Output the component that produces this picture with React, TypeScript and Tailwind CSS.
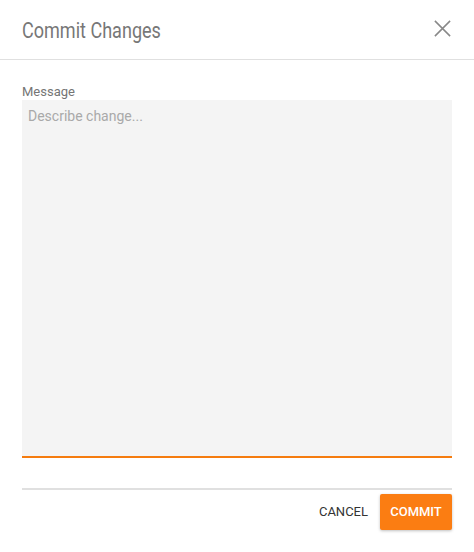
export default function App() {
  return (
    <div className="w-[474px] h-[552px] bg-white font-['Roboto',sans-serif]">
      <div className="flex items-center justify-between h-[60px] pl-[22px] pr-[22px] border-b border-[#e0e0e0]">
        <h2 className="text-[22px] leading-[26px] mt-[2px] text-[#777] font-normal origin-left scale-x-[0.82]">
          Commit Changes
        </h2>
        <button className="text-[#888] mt-[-2px]">
          <svg width="19" height="19" viewBox="0 0 20 20" fill="none" stroke="currentColor" strokeWidth="1.6">
            <path d="M2 2 L18 18 M18 2 L2 18" />
          </svg>
        </button>
      </div>
      <div className="px-[22px] pt-[24px]">
        <label className="block text-[13px] leading-[16px] text-[#757575]">Message</label>
        <textarea
          placeholder="Describe change..."
          className="block w-full h-[358px] bg-[#f4f4f4] border-b-2 border-[#f57c0f] px-[6px] py-[6px] text-[14px] text-[#333] placeholder:text-[#a9a9a9] resize-none outline-none"
        />
        <div className="mt-[30px] border-t-2 border-[#e0e0e0]" />
        <div className="flex justify-end items-center gap-[4px] mt-[4px]">
          <button className="h-[36px] px-[8px] text-[13px] text-[#333] uppercase">Cancel</button>
          <button className="h-[36px] w-[72px] rounded-[2px] bg-[#fb7d12] text-white text-[13px] font-medium uppercase shadow-[0_1px_3px_rgba(0,0,0,0.25)]">
            Commit
          </button>
        </div>
      </div>
    </div>
  );
}
